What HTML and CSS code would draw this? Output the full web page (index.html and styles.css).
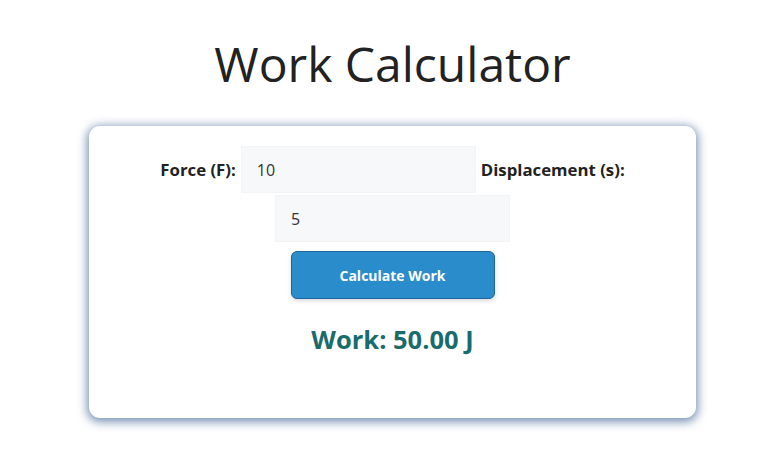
FILE: index.html
```html
<!DOCTYPE html>
<html lang="en">
<head>
<meta charset="utf-8">
<title>Work Calculator</title>
<link rel="stylesheet" href="styles.css">
</head>
<body>
<div class="page">
  <h1 class="title">Work Calculator</h1>
  <div class="card">
    <div class="fields">
      <label class="label" for="force">Force (F):</label>
      <input class="input" id="force" type="text" value="10">
      <label class="label" for="disp">Displacement (s):</label>
      <input class="input" id="disp" type="text" value="5">
    </div>
    <div class="actions">
      <button class="btn" type="button">Calculate Work</button>
    </div>
    <div class="result">Work: 50.00 J</div>
  </div>
</div>
</body>
</html>
```
FILE: styles.css
```css
* { box-sizing: border-box; }
html, body { margin: 0; padding: 0; background: #fff; }
body {
  font-family: "Open Sans", "Noto Sans", "Liberation Sans", sans-serif;
  color: #222;
}
.page {
  width: 607px;
  margin: 0 0 0 89px;
  padding: 24px 0 40px 0;
}
.title {
  margin: 0 0 22px 0;
  text-align: center;
  font-weight: 400;
  font-size: 48px;
  line-height: 80px;
  color: #222;
}
.card {
  height: 292px;
  background: #fff;
  border-radius: 11px;
  box-shadow: 0 2px 10px 2px rgba(50, 90, 140, 0.65);
  padding: 20px 20px;
}
.fields {
  display: flex;
  flex-wrap: wrap;
  justify-content: center;
  align-items: center;
  column-gap: 5px;
  row-gap: 2px;
}
.label {
  font-weight: 700;
  font-size: 16.8px;
  color: #222;
}
.input {
  width: 235px;
  height: 47px;
  border: 1px solid #f3f4f6;
  background: #f7f8fa;
  padding: 0 15px;
  font-family: inherit;
  font-size: 16px;
  color: #333;
  outline: none;
}
.actions {
  display: flex;
  justify-content: center;
  margin-top: 9px;
}
.btn {
  width: 204px;
  height: 48px;
  background: #2b8ccc;
  border: 1px solid #1d64a0;
  border-radius: 6px;
  color: #fff;
  font-family: inherit;
  font-weight: 700;
  font-size: 14px;
  box-shadow: 0 2px 4px rgba(0,0,0,0.15);
}
.result {
  margin-top: 23px;
  text-align: center;
  font-weight: 700;
  font-size: 25.5px;
  color: #1a6b6b;
}
```
